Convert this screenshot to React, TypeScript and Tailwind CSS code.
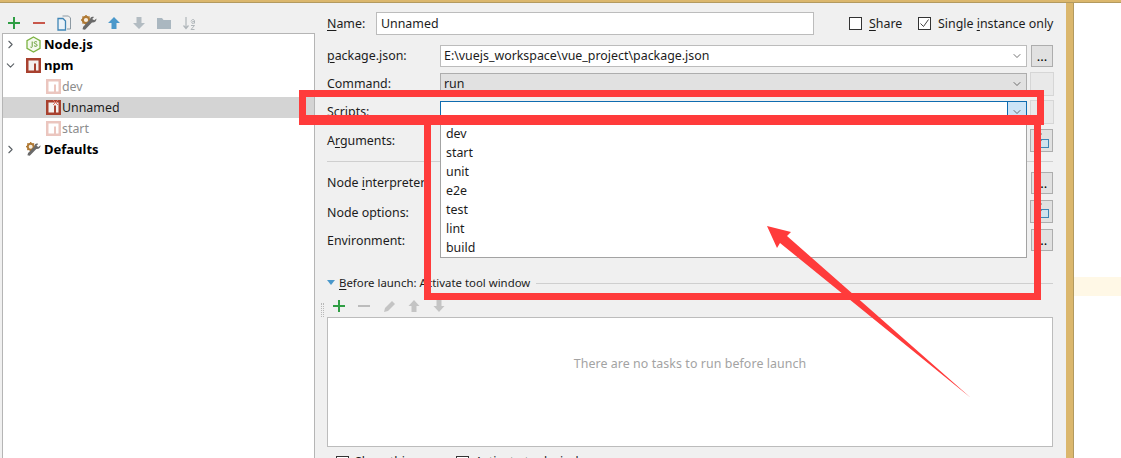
import React from 'react';
import { ChevronDown, ChevronRight } from 'lucide-react';

const font = { fontFamily: '"Noto Sans", "Liberation Sans", sans-serif' };

function NpmIcon({ faded, modified }: { faded?: boolean; modified?: boolean }) {
  const c = faded ? '#ebc6bf' : '#a8412f';
  return (
    <svg width="15" height="15" viewBox="0 0 15 15" className="shrink-0">
      <rect width="15" height="15" fill={c} />
      <path d="M2.500 2.500h10v10h-2.500V5.500H8V12.500H2.500z" fill={faded ? '#ffffff' : '#f3f0ee'} />
      {modified && <path d="M7 0l5 5M12 0L7 5" stroke="#e8705f" strokeWidth="1" />}
    </svg>
  );
}

function NodeIcon() {
  return (
    <svg width="15" height="17" viewBox="0 0 15 17" className="shrink-0">
      <path d="M7.500 1L14 4.700v7.600L7.500 16 1 12.300V4.700z" fill="#f4f9ee" stroke="#7cb342" strokeWidth="1.300" />
      <path d="M6.200 5.500v5.200c0 .9-1.300 1-1.800.3" fill="none" stroke="#689f38" strokeWidth="1" />
      <path d="M11 6.200c-.7-.9-2.800-.8-2.800.5 0 1.500 3 .8 3 2.500 0 1.300-2.300 1.500-3.200.4" fill="none" stroke="#689f38" strokeWidth="1" />
    </svg>
  );
}

function WrenchIcon({ size = 15 }: { size?: number }) {
  return (
    <svg width={size} height={size} viewBox="0 0 16 16" className="shrink-0">
      <circle cx="5" cy="5" r="3.200" fill="#f7efe2" stroke="#b07a35" strokeWidth="2.200" />
      <path d="M5 0v2M5 8v2M0 5h2M8 5h2M1.500 1.500l1.400 1.400M7 7l1.400 1.400M8.500 1.500L7 3M3 7L1.500 8.500" stroke="#b07a35" strokeWidth="1.400" />
      <path d="M15.500 3.500l-2.300 1.800-2-1.200L13 2C11 1 8.900 2.300 9 4.800L2.200 11.700l-.7 2.500 2.500.5L11 7.500c2.500.4 4.700-1.500 4.500-4z" fill="#6a6a6a" />
    </svg>
  );
}

function ToolbarIcons() {
  return (
    <div className="h-[21px] shrink-0 flex items-center pl-[4px] gap-[9px]">
      <svg width="16" height="16" viewBox="0 0 16 16"><path d="M8 2v12M2 8h12" stroke="#2f9e44" strokeWidth="2" /></svg>
      <svg width="16" height="16" viewBox="0 0 16 16"><path d="M2 8h12" stroke="#c8574b" strokeWidth="2" /></svg>
      <svg width="16" height="16" viewBox="0 0 16 16">
        <path d="M6.500 1h6l2 2v11H11" fill="none" stroke="#8d9aa3" strokeWidth="1" />
        <path d="M2 3.500h5l2.500 2.500v9H2z" fill="#eaf2f8" stroke="#3f85b5" strokeWidth="1.300" />
      </svg>
      <WrenchIcon size={16} />
      <svg width="16" height="16" viewBox="0 0 16 16"><path d="M8 2l6 6h-3.500v6h-5V8H2z" fill="#4a98cb" /></svg>
      <svg width="16" height="16" viewBox="0 0 16 16"><path d="M8 14l6-6h-3.500V2h-5v6H2z" fill="#b3bcc2" /></svg>
      <svg width="16" height="16" viewBox="0 0 16 16"><path d="M1 3h5l1.500 2H15v9H1z" fill="#aab7c0" /></svg>
      <svg width="16" height="16" viewBox="0 0 16 16">
        <path d="M5 2v11M2.500 10.500L5 13.500l2.500-3" fill="none" stroke="#b0b6ba" strokeWidth="1.200" />
        <path d="M10 6.500c.5-2.500 3.500-2.500 3.500-.5v2.500M13.500 6.500c-3-.5-3.500 2-1.800 2 1 0 1.800-.8 1.800-1.500M10 10.500h3.500L10 14.500h3.500" fill="none" stroke="#b0b6ba" strokeWidth="1" />
      </svg>
    </div>
  );
}

function TreeRow({ icon, label, indent, bold, faded, selected, arrow }: any) {
  return (
    <div className={`h-[21px] flex items-center ${selected ? 'bg-[#d4d4d4]' : ''}`}>
      <div className="w-[23px] pl-[1px] shrink-0 text-[#5b6166]">
        {arrow === 'right' && <ChevronRight size={13} strokeWidth={2} />}
        {arrow === 'down' && <ChevronDown size={13} strokeWidth={2} />}
      </div>
      <div className={`flex items-center ${indent ? 'pl-[20px] gap-[1px]' : 'gap-[3px]'}`}>
        {icon}
        <span className={`leading-none ${bold ? 'text-[13px] font-bold text-black' : 'text-[12.4px] pt-[2px]'} ${faded ? 'text-[#8d8d8d]' : 'text-[#1c1c1c]'}`}>{label}</span>
      </div>
    </div>
  );
}

function Tree() {
  return (
    <div className="flex-1 bg-white border border-[#b5b5b5] border-b-0">
      <TreeRow arrow="right" icon={<NodeIcon />} label="Node.js" bold />
      <TreeRow arrow="down" icon={<NpmIcon />} label="npm" bold />
      <TreeRow indent faded icon={<NpmIcon faded />} label="dev" />
      <TreeRow indent selected icon={<NpmIcon modified />} label="Unnamed" />
      <TreeRow indent faded icon={<NpmIcon faded />} label="start" />
      <TreeRow arrow="right" icon={<WrenchIcon />} label="Defaults" bold />
    </div>
  );
}

function Mnemonic({ before = '', letter, after = '' }: { before?: string; letter: string; after?: string }) {
  return (
    <span className="block text-[12.4px] leading-[16px] text-[#1c1c1c] whitespace-nowrap">
      {before}
      <span className="underline underline-offset-2">{letter}</span>
      {after}
    </span>
  );
}

function Combo({ value, gray, focused }: { value?: string; gray?: boolean; focused?: boolean }) {
  return (
    <div
      className={`w-[587px] h-[22px] shrink-0 flex items-center justify-between border text-[12.4px] pl-[3px] ${
        focused ? 'border-[#0f6cb0] bg-white' : gray ? 'border-[#adadad] bg-[#e1e1e1]' : 'border-[#bcbcbc] bg-white'
      }`}
    >
      <span className="text-[#1c1c1c]">{value}</span>
      <div className={`w-[19px] h-full flex items-center justify-center ${focused ? 'bg-[#cce4f7] border-l border-[#0f6cb0]' : ''}`}>
        <ChevronDown size={12} strokeWidth={1.500} className="text-[#444]" />
      </div>
    </div>
  );
}

function DotsButton() {
  return (
    <div className="ml-[4px] w-[22px] h-[22px] shrink-0 border border-[#adadad] bg-[#e1e1e1] flex items-end justify-center pb-[3px] text-[13px] leading-none text-black">
      ...
    </div>
  );
}

function EmptyButton() {
  return <div className="ml-[3px] w-[24px] h-[24px] shrink-0 border border-[#d6d6d6] bg-[#e9e9e9]" />;
}

function FileButton() {
  return (
    <div className="ml-[3px] w-[23px] h-[23px] shrink-0 border border-[#adadad] bg-[#e1e1e1] flex items-center justify-center">
      <svg width="16" height="16" viewBox="0 0 16 16">
        <path d="M2 3V1h6" fill="none" stroke="#777" strokeWidth="1" />
        <rect x="6.500" y="6.500" width="8" height="8" fill="#cfe2ef" stroke="#3f85b5" />
        <path d="M3 3h3v4h2L4.500 11 1 7h2z" fill="#555" />
      </svg>
    </div>
  );
}

function FormRow({ label, children, className = '' }: any) {
  return (
    <div className={`flex items-center shrink-0 ${className}`}>
      <div className="w-[113px] shrink-0">{label}</div>
      {children}
    </div>
  );
}

function Form() {
  return (
    <div className="w-[726px] flex flex-col pt-[9px]">
      <div className="flex items-center h-[23px] shrink-0">
        <div className="w-[49px] shrink-0"><Mnemonic letter="N" after="ame:" /></div>
        <div className="w-[438px] h-[23px] shrink-0 bg-white border border-[#bcbcbc] flex items-center pl-[4px] pt-[1px] text-[12.4px] text-[#1c1c1c]">Unnamed</div>
        <div className="ml-[35px] w-[13px] h-[13px] border border-[#333] bg-white shrink-0" />
        <div className="ml-[7px] w-[49px] shrink-0"><Mnemonic letter="S" after="hare" /></div>
        <div className="w-[13px] h-[13px] border border-[#333] bg-white shrink-0 flex items-center justify-center">
          <svg width="11" height="11" viewBox="0 0 11 11"><path d="M1.500 5.500l3 3 5-7" fill="none" stroke="#444" strokeWidth="1" /></svg>
        </div>
        <div className="ml-[7px]"><Mnemonic before="Single " letter="i" after="nstance only" /></div>
      </div>

      <FormRow className="mt-[10px] h-[22px]" label={<Mnemonic letter="p" after="ackage.json:" />}>
        <Combo value="E:\vuejs_workspace\vue_project\package.json" />
        <DotsButton />
      </FormRow>
      <FormRow className="mt-[6px] h-[22px]" label={<Mnemonic letter="C" after="ommand:" />}>
        <Combo value="run" gray />
        <EmptyButton />
      </FormRow>
      <FormRow className="mt-[6px] h-[22px]" label={<Mnemonic before="Scrip" letter="t" after="s:" />}>
        <Combo focused />
        <EmptyButton />
      </FormRow>
      <FormRow className="mt-[6px] h-[23px]" label={<Mnemonic before="A" letter="r" after="guments:" />}>
        <div className="w-[587px] shrink-0" />
        <FileButton />
      </FormRow>

      <div className="mt-[9px] h-px shrink-0 bg-[#cfcfcf]" />

      <FormRow className="mt-[10px] h-[22px]" label={<Mnemonic before="Node " letter="i" after="nterpreter:" />}>
        <div className="w-[587px] shrink-0" />
        <DotsButton />
      </FormRow>
      <FormRow className="mt-[6px] h-[22px]" label={<div className="pt-[4px]"><Mnemonic before="Node options:" letter="" /></div>}>
        <div className="w-[587px] shrink-0" />
        <FileButton />
      </FormRow>
      <FormRow className="mt-[7px] h-[22px]" label={<div className="pt-[2px]"><Mnemonic before="Environment:" letter="" /></div>}>
        <div className="w-[587px] shrink-0" />
        <DotsButton />
      </FormRow>

      <div className="mt-[22px] h-[20px] shrink-0 flex items-center">
        <svg width="8" height="6" viewBox="0 0 8 6" className="mr-[4px]"><path d="M0 0h8L4 5z" fill="#4a98cb" /></svg>
        <span className="text-[11.4px] leading-[16px] text-[#1c1c1c] whitespace-nowrap">
          <span className="underline underline-offset-2">B</span>efore launch: Activate tool window
        </span>
        <div className="ml-[6px] flex-1 h-px bg-[#cfcfcf]" />
      </div>

      <div className="mt-[3px] h-[20px] shrink-0 flex items-center pl-[4px] gap-[9px]">
        <svg width="16" height="16" viewBox="0 0 16 16"><path d="M8 2v12M2 8h12" stroke="#2f9e44" strokeWidth="2" /></svg>
        <svg width="16" height="16" viewBox="0 0 16 16"><path d="M2 8h12" stroke="#bcbcbc" strokeWidth="2" /></svg>
        <svg width="16" height="16" viewBox="0 0 16 16"><path d="M11 3l3 3-7 7-4 1 1-4z" fill="#c4c4c4" /></svg>
        <svg width="16" height="16" viewBox="0 0 16 16"><path d="M8 2l5.500 6H10.500v6h-5V8H2.500z" fill="#c4c4c4" /></svg>
        <svg width="16" height="16" viewBox="0 0 16 16"><path d="M8 14l5.500-6H10.500V2h-5v6H2.500z" fill="#c4c4c4" /></svg>
      </div>

      <div className="mt-[1px] h-[130px] shrink-0 bg-white border border-[#bcbcbc] flex items-start justify-center pt-[37px] text-[12.4px] text-[#a3a3a3] tracking-[0.08px]">
        There are no tasks to run before launch
      </div>

      <div className="mt-[9px] pl-[9px] shrink-0 flex items-start text-[12.4px] text-[#1c1c1c] leading-none">
        <div className="w-[13px] h-[13px] border border-[#333] bg-white" />
        <span className="ml-[6px] w-[101px]">Show this page</span>
        <div className="w-[13px] h-[13px] border border-[#333] bg-white" />
        <span className="ml-[6px]">Activate tool window</span>
      </div>
    </div>
  );
}

function ScriptsPopup() {
  const items = ['dev', 'start', 'unit', 'e2e', 'test', 'lint', 'build'];
  return (
    <div className="absolute left-[440px] top-[122px] w-[587px] h-[136px] bg-white border border-[#a3a3a3] pt-[1px] pl-[5px] text-[12.4px] text-[#1c1c1c]">
      {items.map((item) => (
        <div key={item} className="h-[19px] leading-[19px]">{item}</div>
      ))}
    </div>
  );
}

// red markup drawn over the screenshot
function Annotations() {
  return (
    <>
      <div className="absolute left-[299px] top-[90px] w-[745px] h-[35px] border-[#ff3b3b] border-t-[7px] border-l-[7px] border-r-[7px] border-b-[10px]" />
      <div className="absolute left-[424px] top-[115px] w-[617px] h-[185px] border-[#ff3b3b] border-l-[7px] border-r-[7px] border-b-[7px] border-t-[10px]" />
      <svg width="1121" height="458" viewBox="0 0 1121 458" className="absolute left-0 top-0 pointer-events-none">
        <path d="M767 226L791 232L787 236L971 398L780 243L777 248Z" fill="#ff3b3b" />
      </svg>
    </>
  );
}

export default function App() {
  return (
    <div className="relative w-[1121px] h-[458px] overflow-hidden bg-white flex flex-col" style={font}>
      <div className="h-[3px] shrink-0 bg-[#dbb76d] border-b border-[#b39a5f]" />
      <div className="flex flex-1 min-h-0">
        <div className="w-[1066px] bg-[#f0f0f0] flex">
          <div className="w-[315px] shrink-0 pl-[2px] pt-[9px] flex flex-col">
            <ToolbarIcons />
            <Tree />
          </div>
          <div className="w-[12px] shrink-0 flex justify-center pt-[300px] pl-[2px]">
            <div className="w-[3px] h-[14px] border-l border-r border-dotted border-[#b8b8b8]" />
          </div>
          <Form />
        </div>
        <div className="w-[8px] shrink-0 bg-[#dbb76d] border-r border-[#b39a5f]" />
        <div className="flex-1 pt-[274px]">
          <div className="h-[19px] bg-[#fff8e6]" />
        </div>
      </div>
      <ScriptsPopup />
      <Annotations />
    </div>
  );
}
